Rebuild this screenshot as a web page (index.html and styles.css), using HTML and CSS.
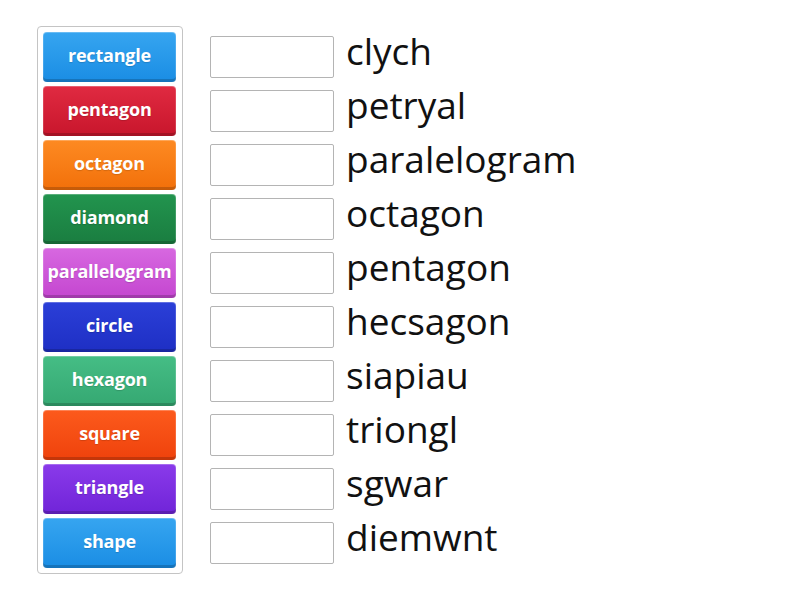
FILE: index.html
```html
<!DOCTYPE html>
<html>
<head>
<meta charset="utf-8">
<link rel="stylesheet" href="styles.css">
</head>
<body>
<div class="page">
  <div class="bank">
    <div class="tile c1">rectangle</div>
    <div class="tile c2">pentagon</div>
    <div class="tile c3">octagon</div>
    <div class="tile c4">diamond</div>
    <div class="tile c5">parallelogram</div>
    <div class="tile c6">circle</div>
    <div class="tile c7">hexagon</div>
    <div class="tile c8">square</div>
    <div class="tile c9">triangle</div>
    <div class="tile c10">shape</div>
  </div>
  <div class="targets">
    <div class="row"><div class="slot"></div><span class="word">clych</span></div>
    <div class="row"><div class="slot"></div><span class="word">petryal</span></div>
    <div class="row"><div class="slot"></div><span class="word">paralelogram</span></div>
    <div class="row"><div class="slot"></div><span class="word">octagon</span></div>
    <div class="row"><div class="slot"></div><span class="word">pentagon</span></div>
    <div class="row"><div class="slot"></div><span class="word">hecsagon</span></div>
    <div class="row"><div class="slot"></div><span class="word">siapiau</span></div>
    <div class="row"><div class="slot"></div><span class="word">triongl</span></div>
    <div class="row"><div class="slot"></div><span class="word">sgwar</span></div>
    <div class="row"><div class="slot"></div><span class="word">diemwnt</span></div>
  </div>
</div>
</body>
</html>
```
FILE: styles.css
```css
html, body {
  margin: 0;
  padding: 0;
  background: #ffffff;
}
body {
  font-family: "Open Sans", "Noto Sans", sans-serif;
}
.page {
  display: flex;
  align-items: flex-start;
  padding: 26px 0 0 37px;
  gap: 27px;
}
.bank {
  width: 146px;
  box-sizing: border-box;
  border: 1px solid #c4c4c4;
  border-radius: 4px;
  padding: 5px 6px 5px 5px;
  display: flex;
  flex-direction: column;
  gap: 4px;
}
.tile {
  height: 50px;
  box-sizing: border-box;
  padding-bottom: 4px;
  border-radius: 4px;
  display: flex;
  align-items: center;
  justify-content: center;
  color: #ffffff;
  font-weight: 700;
  font-size: 18px;
  letter-spacing: -0.2px;
  white-space: nowrap;
  box-shadow: inset 0 -3px 0 rgba(0,0,0,0.18), inset 0 1px 0 rgba(255,255,255,0.25), inset 1px 0 0 rgba(255,255,255,0.15), inset -1px 0 0 rgba(255,255,255,0.15);
  text-shadow: 0 1px 1px rgba(0,0,0,0.15);
}
.c1 { background: linear-gradient(#36a5f0, #1a8de4); }
.c2 { background: linear-gradient(#e02a41, #c8162c); }
.c3 { background: linear-gradient(#fd8a22, #f2700a); }
.c4 { background: linear-gradient(#22944e, #1a7d40); }
.c5 { background: linear-gradient(#d768e0, #c446d0); }
.c6 { background: linear-gradient(#2b3fd8, #1e2fc4); }
.c7 { background: linear-gradient(#45bd85, #35a872); }
.c8 { background: linear-gradient(#fc5a1c, #ef420c); }
.c9 { background: linear-gradient(#8a3aea, #7024d8); }
.c10 { background: linear-gradient(#36a5f0, #1a8de4); }
.targets {
  display: flex;
  flex-direction: column;
  gap: 4px;
  padding-top: 6px;
}
.row {
  height: 50px;
  display: flex;
  align-items: center;
  gap: 12px;
}
.slot {
  width: 124px;
  height: 42px;
  box-sizing: border-box;
  border: 1px solid #b4b4b4;
  border-radius: 2px;
  background: #fff;
}
.word {
  font-size: 37px;
  color: #111111;
  line-height: 1;
  position: relative;
  top: -7px;
}
```
